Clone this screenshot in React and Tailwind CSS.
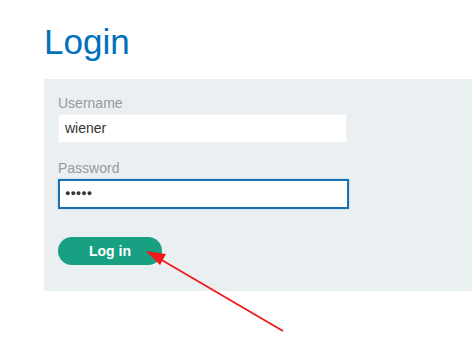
import React from "react";

export default function App() {
  return (
    <div className="relative w-[474px] h-[343px] bg-white overflow-hidden" style={{ fontFamily: '"Liberation Sans", Arial, sans-serif' }}>
      <h1 className="ml-[44px] pt-[19px] text-[35px] leading-[46px] text-[#0071bc] font-normal">Login</h1>
      <div className="ml-[44px] mt-[14px] w-[428px] h-[212px] bg-[#eaeff2] pl-[14px] pt-[14px]">
        <label className="block text-[14px] leading-[20px] text-[#999]">Username</label>
        <div className="mt-[1px] w-[289px] h-[29px] bg-white border border-[#f0f2f4] flex items-center pl-[6px] text-[14px] text-[#333]">wiener</div>
        <label className="block mt-[15px] text-[14px] leading-[20px] text-[#999]">Password</label>
        <div className="mt-[1px] w-[291px] h-[30px] bg-white border-2 border-[#1a6fae] shadow-[0_0_2px_#9fd0f5] flex items-center pl-[5px] text-[9px] text-[#333] tracking-[0px]">●●●●●</div>
        <button className="mt-[28px] w-[104px] h-[28px] rounded-full bg-[#17a082] text-white font-bold text-[14px] leading-none flex items-center justify-center">Log in</button>
      </div>
      <svg className="absolute left-0 top-0" width="474" height="343" viewBox="0 0 474 343">
        <line x1="283" y1="331" x2="160" y2="259" stroke="#f01818" strokeWidth="1.8" />
        <polygon points="146,251 166,254 160,265" fill="#f01818" />
      </svg>
    </div>
  );
}
